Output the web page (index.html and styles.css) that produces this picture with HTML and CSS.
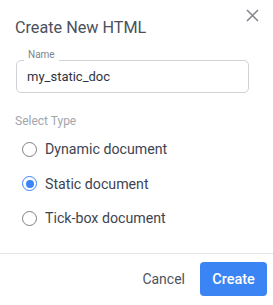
FILE: index.html
```html
<!DOCTYPE html>
<html>
<head>
<meta charset="utf-8">
<link rel="stylesheet" href="styles.css">
</head>
<body>
<div class="dialog">
  <button class="close" aria-label="Close">
    <svg width="13" height="13" viewBox="0 0 13 13"><path d="M1 1L12 12M12 1L1 12" stroke="#80858c" stroke-width="1.5" fill="none"/></svg>
  </button>
  <div class="content">
    <h1 class="title">Create New HTML</h1>
    <div class="field">
      <label class="field-label">Name</label>
      <div class="input">my_static_doc</div>
    </div>
    <div class="section-label">Select Type</div>
    <div class="radios">
      <div class="radio"><span class="dot"></span><span class="radio-text">Dynamic document</span></div>
      <div class="radio checked"><span class="dot"></span><span class="radio-text">Static document</span></div>
      <div class="radio"><span class="dot"></span><span class="radio-text">Tick-box document</span></div>
    </div>
  </div>
  <div class="footer">
    <button class="btn-cancel">Cancel</button>
    <button class="btn-create">Create</button>
  </div>
</div>
</body>
</html>
```
FILE: styles.css
```css
* { box-sizing: border-box; }
html, body { margin: 0; padding: 0; background: #fff; }
body { font-family: Roboto, "Noto Sans", sans-serif; color: #3e4451; }
.dialog { position: relative; width: 273px; height: 305px; background: #fff; }
.close { position: absolute; top: 9px; left: 246px; width: 14px; height: 14px; padding: 0; border: 0; background: none; display: flex; }
.content { padding: 18px 24px 0 15px; }
.title { margin: 0; font-size: 16.2px; line-height: 20px; font-weight: 400; color: #4a505c; }
.field { position: relative; margin-top: 22px; margin-left: 1px; }
.field-label { position: absolute; left: 8px; top: -12px; padding: 0 4px; background: #fff; font-size: 10px; line-height: 14px; color: #80858c; }
.input { height: 33px; border: 1px solid #cfd2d6; border-radius: 5px; padding: 0 10px; font-size: 13px; line-height: 32px; color: #2e3440; }
.section-label { margin-top: 21px; font-size: 12px; line-height: 15px; color: #a1a5ac; }
.radios { margin-top: 3px; }
.radio { height: 34.5px; display: flex; align-items: center; }
.dot { width: 15px; height: 15px; border: 1.6px solid #7a7f87; border-radius: 50%; margin-left: 7px; margin-right: 8px; display: flex; align-items: center; justify-content: center; }
.radio.checked .dot { border-color: #3a84f4; }
.radio.checked .dot::after { content: ""; width: 8px; height: 8px; border-radius: 50%; background: #3a84f4; }
.radio-text { font-size: 14.2px; color: #3e4451; }
.footer { position: absolute; left: 0; right: 0; top: 253px; border-top: 1px solid #e4e5e7; padding: 8px 6px 0 0; display: flex; justify-content: flex-end; align-items: center; gap: 15px; }
.btn-cancel { border: 0; background: none; font-family: inherit; font-size: 14px; color: #4d5360; padding: 0; }
.btn-create { width: 67px; height: 34px; border: 0; border-radius: 4px; background: #3a84f4; color: #fff; font-family: inherit; font-size: 14.5px; font-weight: 500; }
```
